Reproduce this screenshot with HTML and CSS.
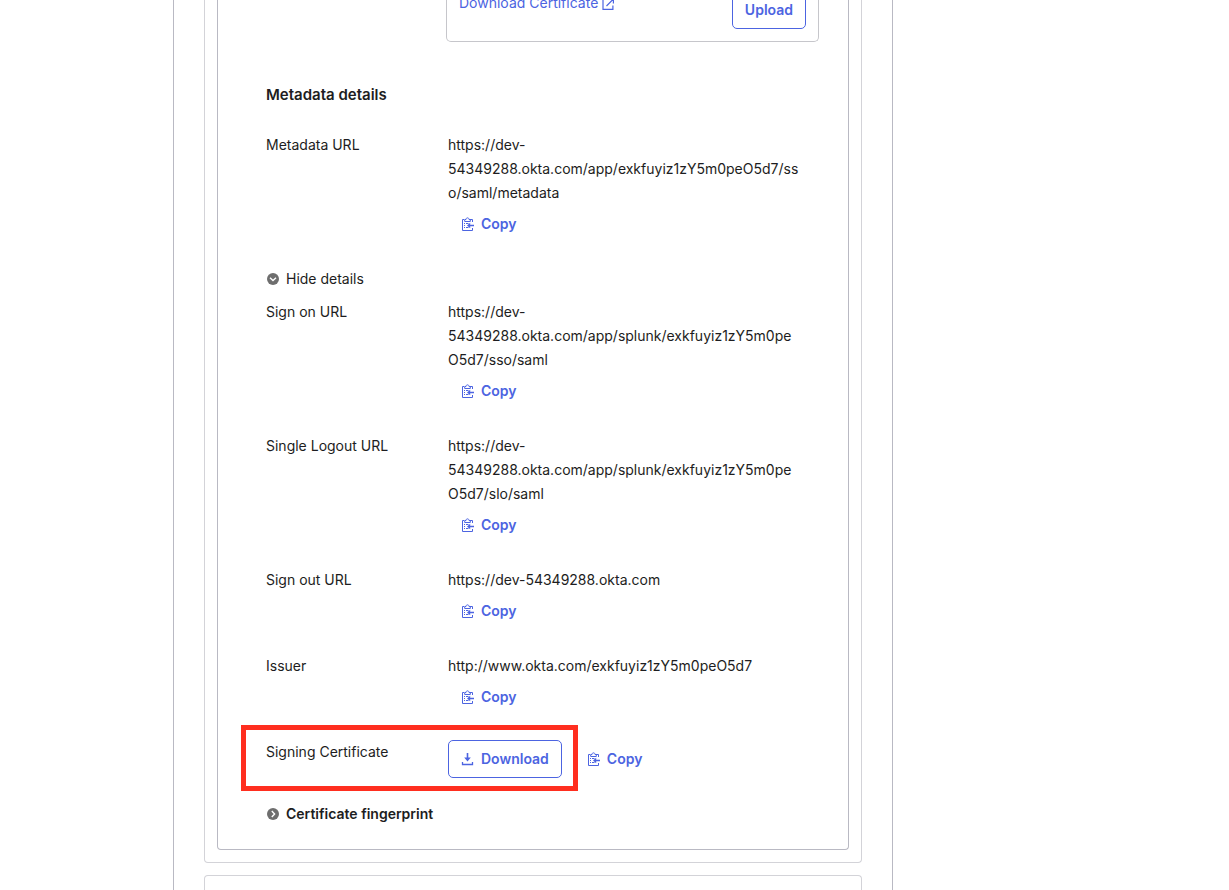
FILE: index.html
```html
<!DOCTYPE html>
<html lang="en">
<head>
<meta charset="utf-8">
<meta name="viewport" content="width=device-width, initial-scale=1">
<title>Metadata details</title>
<link rel="stylesheet" href="styles.css">
</head>
<body>
<svg class="sprite" aria-hidden="true">
  <symbol id="copy" viewBox="0 0 13 14">
    <path d="M3 2.500H1.500v11h10V11M9 2.500h2.500V5M3.700 4.500V2.500h1.300C5 .3 8 .3 8 2.500h1.300v2z" fill="none" stroke="currentColor" stroke-width="1"/>
    <path d="M3 6.500h1M5 6.500h2.500M3 8.500h1M3 10.500h1M5 10.500h2.500" fill="none" stroke="currentColor" stroke-width="1"/>
    <path d="M6 8.500 9.200 5.800v2H13v1.400H9.200v2z" fill="currentColor"/>
  </symbol>
  <symbol id="download" viewBox="0 0 13 14">
    <path d="M5.700 1h1.600v4.500h2.500L6.500 9.500 3.200 5.500h2.500z" fill="currentColor"/>
    <path d="M1.500 10v2.500h10V10" fill="none" stroke="currentColor" stroke-width="1.300"/>
  </symbol>
  <symbol id="external" viewBox="0 0 12 12">
    <path d="M5 1.500H1v9.900h9.900V7.500M7 1h4.400v4.400M11 1.400 4.500 8" fill="none" stroke="currentColor" stroke-width="1.200"/>
  </symbol>
  <symbol id="down" viewBox="0 0 12 12">
    <circle cx="6" cy="6" r="6" fill="#6e6e6e"/>
    <path d="M3 4.800 6 7.600l3-2.800" fill="none" stroke="#fff" stroke-width="1.400"/>
  </symbol>
  <symbol id="right" viewBox="0 0 12 12">
    <circle cx="6" cy="6" r="6" fill="#6e6e6e"/>
    <path d="M4.800 3 7.600 6l-2.800 3" fill="none" stroke="#fff" stroke-width="1.400"/>
  </symbol>
</svg>
<main class="page">
  <section class="panel">
    <div class="card">
      <div class="upload-box">
        <a class="link" href="#">Download Certificate <svg class="icon-external"><use href="#external"/></svg></a>
        <button class="btn btn-outline" type="button">Upload</button>
      </div>
      <h2 class="heading">Metadata details</h2>
      <dl class="details">
        <div class="row">
          <dt>Metadata URL</dt>
          <dd><span class="url">https://dev-54349288.okta.com/app/exkfuyiz1zY5m0peO5d7/sso/saml/metadata</span>
            <button class="btn" type="button"><svg class="icon"><use href="#copy"/></svg>Copy</button></dd>
        </div>
      </dl>
      <button class="toggle" type="button" aria-expanded="true"><svg class="icon-toggle"><use href="#down"/></svg>Hide details</button>
      <dl class="details">
        <div class="row">
          <dt>Sign on URL</dt>
          <dd><span class="url">https://dev-54349288.okta.com/app/splunk/exkfuyiz1zY5m0peO5d7/sso/saml</span>
            <button class="btn" type="button"><svg class="icon"><use href="#copy"/></svg>Copy</button></dd>
        </div>
        <div class="row">
          <dt>Single Logout URL</dt>
          <dd><span class="url">https://dev-54349288.okta.com/app/splunk/exkfuyiz1zY5m0peO5d7/slo/saml</span>
            <button class="btn" type="button"><svg class="icon"><use href="#copy"/></svg>Copy</button></dd>
        </div>
        <div class="row">
          <dt>Sign out URL</dt>
          <dd><span class="url">https://dev-54349288.okta.com</span>
            <button class="btn" type="button"><svg class="icon"><use href="#copy"/></svg>Copy</button></dd>
        </div>
        <div class="row">
          <dt>Issuer</dt>
          <dd><span class="url">http://www.okta.com/exkfuyiz1zY5m0peO5d7</span>
            <button class="btn" type="button"><svg class="icon"><use href="#copy"/></svg>Copy</button></dd>
        </div>
        <div class="row row-marked">
          <dt>Signing Certificate</dt>
          <dd class="actions">
            <button class="btn btn-outline" type="button"><svg class="icon"><use href="#download"/></svg>Download</button>
            <button class="btn" type="button"><svg class="icon"><use href="#copy"/></svg>Copy</button>
          </dd>
        </div>
      </dl>
      <button class="toggle toggle-bold" type="button" aria-expanded="false"><svg class="icon-toggle"><use href="#right"/></svg>Certificate fingerprint</button>
    </div>
  </section>
  <section class="panel panel-next"></section>
</main>
</body>
</html>
```
FILE: styles.css
```css
*,
*::before {
  box-sizing: border-box;
}

body {
  margin: 0;
  height: 100vh;
  overflow: hidden;
  background: #fff;
  color: #1d1d21;
  font: 14px/24px Inter, "Liberation Sans", sans-serif;
}

.sprite {
  display: none;
}

.page {
  display: flex;
  flex-direction: column;
  gap: 12px;
  max-width: 720px;
  min-height: 100vh;
  margin-left: 173px;
  padding: 0 30px;
  border: 1px solid #b9b9c3;
  border-width: 0 1px;
}

.panel {
  padding: 0 12px 12px;
  border: 1px solid #d3d3d8;
  border-top: 0;
  border-radius: 0 0 4px 4px;
}

.panel-next {
  flex: 1;
  border-width: 1px 1px 0;
  border-top: 1px solid #d3d3d8;
  border-radius: 4px 4px 0 0;
}

.card {
  padding: 0 29px 23px 48px;
  border: 1px solid #b9b9c3;
  border-top: 0;
  border-radius: 0 0 4px 4px;
}

/* The box continues above the visible part of the page. */
.upload-box {
  display: flex;
  justify-content: space-between;
  align-items: flex-start;
  margin: -9px 0 0 180px;
  padding: 0 12px 12px;
  border: 1px solid #c6c6cb;
  border-top: 0;
  border-radius: 0 0 5px 5px;
}

.link {
  color: #4c64e1;
  text-decoration: none;
}

.heading {
  margin: 41px 0 26px;
  font-size: 15px;
  font-weight: 600;
  line-height: 24px;
}

.details {
  margin: 0;
}

.row {
  display: grid;
  grid-template-columns: 182px minmax(0, 1fr);
  margin-bottom: 24px;
}

dd {
  margin: 0 18px 0 0;
}

.url {
  display: block;
  overflow-wrap: anywhere;
}

.btn {
  display: inline-flex;
  align-items: center;
  gap: 7px;
  height: 38px;
  padding: 0 12px;
  border: 1px solid transparent;
  border-radius: 5px;
  background: none;
  color: #4c64e1;
  font: inherit;
  font-weight: 600;
  vertical-align: top;
}

.btn-outline {
  border-color: #4c64e1;
}

.icon {
  width: 13px;
  height: 14px;
}

.icon-external {
  width: 12px;
  height: 12px;
  vertical-align: -2px;
}

.actions {
  display: flex;
  gap: 12px;
}

.row-marked {
  position: relative;
}

.row-marked::before {
  content: "";
  position: absolute;
  top: -15px;
  left: -25px;
  width: 337px;
  height: 66px;
  border: 5px solid #ff2e1f;
  pointer-events: none;
}

.toggle {
  display: flex;
  align-items: center;
  gap: 7px;
  margin: 0 0 9px;
  padding: 0 1px;
  border: 0;
  background: none;
  color: inherit;
  font: inherit;
}

.toggle-bold {
  margin: 0;
  font-weight: 600;
}

.icon-toggle {
  width: 12px;
  height: 12px;
}
```
